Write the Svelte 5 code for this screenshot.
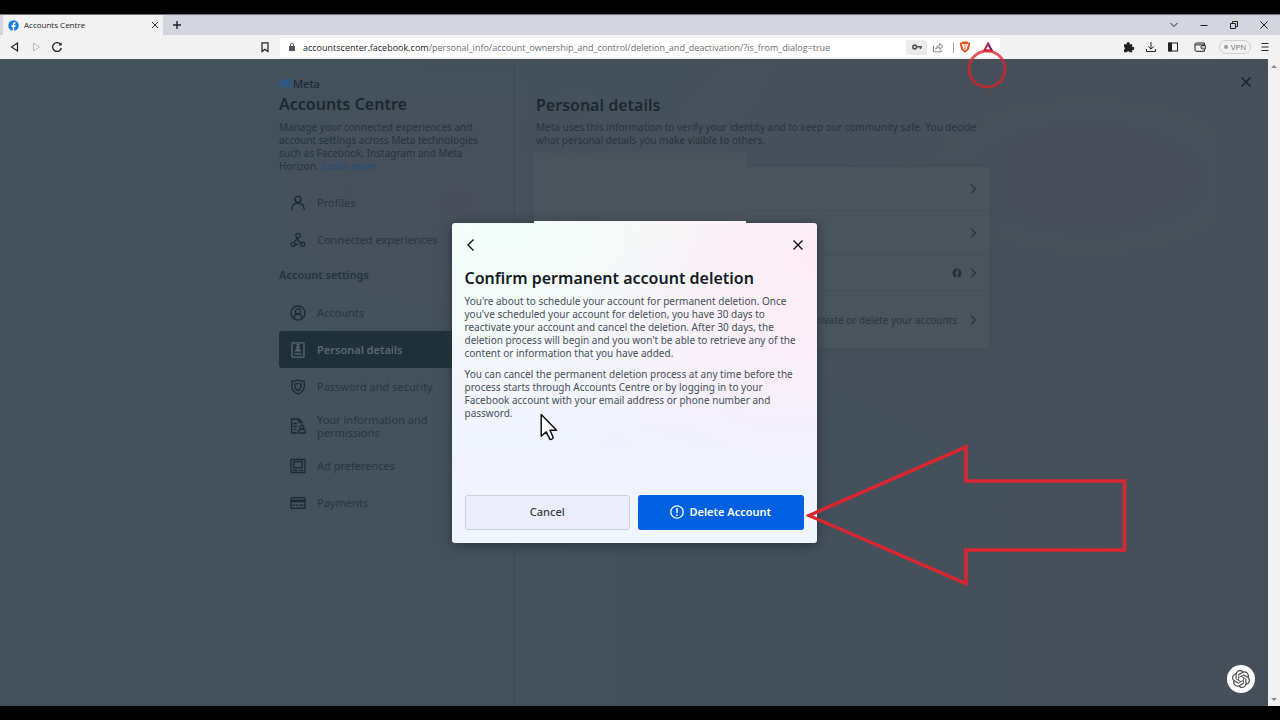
<script lang="ts">
  const profileItems = [
    { id: 'profiles', label: 'Profiles' },
    { id: 'connected', label: 'Connected experiences' }
  ];

  const settingItems = [
    { id: 'accounts', label: 'Accounts' },
    { id: 'personal', label: 'Personal details' },
    { id: 'password', label: 'Password and security' },
    { id: 'info', label: 'Your information and permissions' },
    { id: 'ads', label: 'Ad preferences' },
    { id: 'payments', label: 'Payments' }
  ];

  const rows = [
    { id: 'contact', height: 'tall' },
    { id: 'birthday', height: 'tall' },
    { id: 'identity', height: 'short', facebook: true },
    { id: 'ownership', height: 'last', text: 'Deactivate or delete your accounts' }
  ];

  let active = $state('personal');
</script>

{#snippet cross()}
  <svg class="cross" viewBox="0 0 12 12" fill="none" stroke="currentColor" stroke-width="1.4">
    <path d="M1.5 1.5l9 9M10.5 1.5l-9 9" />
  </svg>
{/snippet}

{#snippet navIcon(id: string)}
  <svg class="nav-icon" viewBox="0 0 16 16" fill="none" stroke="currentColor" stroke-width="1.3" stroke-linecap="round" stroke-linejoin="round">
    {#if id === 'profiles'}
      <circle cx="8" cy="4.4" r="3" />
      <path d="M1.7 14.5c.3-4 2.6-6.4 6.3-6.4s6 2.4 6.3 6.4" />
    {:else if id === 'connected'}
      <circle cx="8" cy="3.6" r="2.2" />
      <circle cx="3.2" cy="12.3" r="2" />
      <circle cx="12.8" cy="12.3" r="2" />
      <path d="M7.3 5.7L4.2 10.5M8 5.8v3l3.2 2.4M5.2 12.3h2.5" />
    {:else if id === 'accounts'}
      <circle cx="8" cy="8" r="7" />
      <circle cx="8" cy="6.5" r="2.6" />
      <path d="M3.9 13c.5-2.4 1.9-3.9 4.1-3.9s3.6 1.5 4.1 3.9" />
    {:else if id === 'personal'}
      <rect x="2" y="0.8" width="12" height="14.4" rx="0.5" />
      <circle cx="8" cy="5.2" r="1.2" />
      <path d="M5.5 8.9c.5-1.6 4.5-1.6 5 0zM5 11.8h6M7 2.6h2" />
    {:else if id === 'password'}
      <path d="M8 1.2c2 .9 4.2 1.2 6.3 1v4.3c0 4-2.2 6.900-6.300 8.500-4.100-1.600-6.300-4.500-6.300-8.500V2.200c2.100.2 4.300-.1 6.300-1z" />
      <path d="M8 4.500c1.100.4 2.200.6 3.200.5v1.800c0 2.200-1.200 3.700-3.200 4.800-2-1.100-3.200-2.600-3.200-4.800V5c1 .1 2.100-.1 3.200-.5z" />
    {:else if id === 'info'}
      <path d="M6.500 15H1.600V1h7.200l3.200 3.200v2M8.800 1v3.200H12M4 5.500h2.500M4 8.300h3M4 11.200h2" />
      <circle cx="12" cy="9.5" r="1.9" />
      <path d="M11 11.300l-2.600 1.300V15h7.200v-2.400L13 11.300" />
    {:else if id === 'ads'}
      <rect x="1" y="1.5" width="14" height="13" />
      <rect x="3.8" y="3.7" width="8.4" height="6.2" />
      <path d="M3.500 12.300h4M10 12.300h2.500" />
    {:else}
      <rect x="1" y="2.7" width="14" height="10.6" />
      <path d="M1 5.200h14M1 6.500h14M3.200 10.200h1.300M6.500 10.200h1.300M10 10.200h2.500" />
    {/if}
  </svg>
{/snippet}

{#snippet navList(items: { id: string; label: string }[])}
  <ul class="nav-list">
    {#each items as item (item.id)}
      <li>
        <button class="nav-item" class:active={item.id === active} onclick={() => (active = item.id)}>
          {@render navIcon(item.id)}
          <span>{item.label}</span>
        </button>
      </li>
    {/each}
  </ul>
{/snippet}

<div class="screen">
  <header class="browser">
    <div class="tab-bar">
      <div class="tab">
        <svg class="favicon" viewBox="0 0 12 12">
          <circle cx="6" cy="6" r="5.7" fill="#1580e4" />
          <path d="M5.200 11.600V7.500H3.800V5.800h1.400V4.700c0-1.500.8-2.300 2.100-2.300.5 0 .9.100 1.100.1V4h-.7c-.7 0-.9.300-.9.900v.9h1.600l-.3 1.700H6.800v4.100z" fill="#fff" />
        </svg>
        <span class="tab-title">Accounts Centre</span>
        <button class="tab-close" aria-label="Close tab">{@render cross()}</button>
      </div>
      <button class="new-tab" aria-label="New tab">
        <svg viewBox="0 0 10 10" stroke="currentColor" stroke-width="1.4"><path d="M5 1v8M1 5h8" /></svg>
      </button>
      <div class="window-controls">
        <button aria-label="Search tabs"><svg viewBox="0 0 10 10" fill="none" stroke="currentColor"><path d="M1.500 3L5 6.500 8.500 3" /></svg></button>
        <button aria-label="Minimise"><svg viewBox="0 0 10 10" fill="none" stroke="currentColor"><path d="M1.500 5.500h7" /></svg></button>
        <button aria-label="Restore"><svg viewBox="0 0 10 10" fill="none" stroke="currentColor"><path d="M1.500 3.500h5v5h-5zM3.500 3.500v-2h5v5h-2" /></svg></button>
        <button aria-label="Close"><svg viewBox="0 0 10 10" fill="none" stroke="currentColor"><path d="M1.500 1.500l7 7M8.500 1.500l-7 7" /></svg></button>
      </div>
    </div>

    <div class="toolbar">
      <div class="history">
        <button aria-label="Back"><svg viewBox="0 0 12 12" fill="none" stroke="currentColor" stroke-width="1.2"><path d="M8.500 2v8L2.500 6z" /></svg></button>
        <button aria-label="Forward" disabled><svg viewBox="0 0 12 12" fill="none" stroke="currentColor"><path d="M3.500 2v8l6-4z" /></svg></button>
        <button aria-label="Reload"><svg viewBox="0 0 12 12" fill="none" stroke="currentColor" stroke-width="1.3"><path d="M9.800 3.800A4.400 4.400 0 1 0 10.300 7" /><path d="M10.600 1.300v3.200H7.400z" fill="currentColor" stroke="none" /></svg></button>
        <button class="bookmark" aria-label="Bookmark"><svg viewBox="0 0 12 12" fill="none" stroke="currentColor" stroke-width="1.2"><path d="M3 1.800h6v8.700L6 8.200l-3 2.300z" /></svg></button>
      </div>

      <div class="address">
        <svg class="lock" viewBox="0 0 12 12" fill="none" stroke="currentColor"><rect x="3.5" y="5.5" width="5" height="4" fill="currentColor" /><path d="M4.500 5V3.700a1.500 1.500 0 0 1 3 0V5" /></svg>
        <span class="url"><span class="host">accountscenter.facebook.com</span>/personal_info/account_ownership_and_control/deletion_and_deactivation/?is_from_dialog=true</span>
        <button class="key" aria-label="Saved passwords"><svg viewBox="0 0 12 12" fill="none" stroke="currentColor" stroke-width="1.6"><circle cx="3.7" cy="6" r="1.9" /><path d="M5.600 5.700H11M9.500 5.700V8" /></svg></button>
        <button aria-label="Share"><svg viewBox="0 0 12 12" fill="none" stroke="#777" stroke-width="0.9"><path d="M1.500 4.500v6.300h7.800V9" /><path d="M3.700 8.300c.3-2.400 1.700-3.600 4-3.700V2.400L11 5.500 7.700 8.400V6.500c-1.800 0-3 .5-4 1.800z" /></svg></button>
        <span class="separator"></span>
        <button aria-label="Brave Shields"><svg viewBox="0 0 12 12"><path d="M3.500.5h5l1 1 1.200-.1.500 2.100-1.500 5.300L6 11.700 2.300 8.800.8 3.500l.5-2.100 1.200.1z" fill="#e8541d" /><path d="M2.500 3.300L4.500 3l1.500.4L7.500 3l2 .3-1.600 3.400.1 1L6 9.400 4 7.700l.1-1z" fill="#fff" /><path d="M4 4.500l1.400.4M8 4.500l-1.400.4M6 5v2M5 7.300l1 .6 1-.6" stroke="#e8541d" stroke-width=".7" fill="none" /></svg></button>
        <button class="rewards" aria-label="Brave Rewards"><svg viewBox="0 0 12 12"><path d="M6 .8L.6 10.600h10.800z" fill="#c31a3b" /><path d="M6 .8l5.400 9.800L8 8.500 6 4.800z" fill="#7b1c76" /><path d="M6 4.800L3.900 8.600h4.200z" fill="#fff" /></svg></button>
      </div>

      <div class="tools">
        <button aria-label="Extensions"><svg viewBox="0 0 12 12" fill="currentColor"><path d="M1 3.200h2.700a1.600 1.600 0 1 1 3 0h2.500V6a1.500 1.500 0 1 1 0 2.800v2.500H6.600a1.500 1.500 0 0 0-2.800 0H1V8.700a1.500 1.500 0 0 0 0-2.800z" /></svg></button>
        <button aria-label="Downloads"><svg viewBox="0 0 12 12" fill="none" stroke="currentColor"><path d="M6 1v7M3.300 5.500L6 8.200l2.700-2.700M1.500 8v2.500h9V8" /></svg></button>
        <button aria-label="Sidebar"><svg viewBox="0 0 12 12" fill="none" stroke="currentColor"><rect x="1.5" y="2" width="9" height="8" /><path d="M2 2h2.500v8H2z" fill="currentColor" /></svg></button>
        <button class="wallet" aria-label="Wallet"><svg viewBox="0 0 12 12" fill="none" stroke="currentColor"><path d="M10.500 4V2H2.500C1.500 2 1 2.500 1 3.200V9c0 .8.500 1.300 1.300 1.300h8.200V8.500M1 3.900h9.500" /><path d="M11.300 4.500H8.700a1.700 1.700 0 0 0 0 3.500h2.600zM8.500 6.200h.8" /></svg></button>
        <button class="vpn"><span class="dot"></span>VPN</button>
        <button aria-label="Menu"><svg viewBox="0 0 12 12" stroke="currentColor" stroke-width="1.2"><path d="M2.500 2.500h7M2.500 6h7M2.500 9.500h7" /></svg></button>
      </div>
    </div>
    <svg class="click-ring" viewBox="0 0 40 40" fill="none" stroke="#d8202c" stroke-opacity=".75" stroke-width="3"><circle cx="20" cy="20" r="18" /></svg>
  </header>

  <div class="viewport">
    <div class="page">
      <div class="content">
        <aside class="sidebar">
          <div class="brand">
            <svg viewBox="0 0 14 10" fill="none" stroke="#1f5cae" stroke-width="1.5"><path d="M1 7C1 3.500 2.300 1.200 3.900 1.200c2.400 0 4 7.500 6.700 7.500 1.500 0 2.400-.8 2.400-2.300 0-3-1.300-5.200-3-5.200-2.700 0-4 7.500-7 7.500C1.700 8.700 1 8.200 1 7z" /></svg>
            <span>Meta</span>
          </div>
          <h1>Accounts Centre</h1>
          <p class="intro">Manage your connected experiences and account settings across Meta technologies such as Facebook, Instagram and Meta Horizon. <a href="#learn">Learn more</a></p>
          <nav>
            {@render navList(profileItems)}
            <h2>Account settings</h2>
            {@render navList(settingItems)}
          </nav>
        </aside>

        <main>
          <h1>Personal details</h1>
          <p>Meta uses this information to verify your identity and to keep our community safe. You decide what personal details you make visible to others.</p>
          <div class="card">
            {#each rows as row (row.id)}
              <button class="row {row.height}" aria-label={row.text ?? row.id}>
                {#if row.text}<span>{row.text}</span>{/if}
                {#if row.facebook}
                  <svg class="fb" viewBox="0 0 10 10"><circle cx="5" cy="5" r="4.5" fill="#26333c" /><path d="M4.300 9.500V6H3.200V4.600h1.100v-.8c0-1.200.7-1.800 1.700-1.800h.8v1.300h-.5c-.5 0-.6.200-.6.600v.7h1.200L6.700 6h-1v3.500z" fill="#4b555e" /></svg>
                {/if}
                <svg class="chevron" viewBox="0 0 10 10" fill="none" stroke="currentColor" stroke-width="1.2"><path d="M3 .5L7.500 5 3 9.500" /></svg>
              </button>
            {/each}
            <div class="redacted"></div>
          </div>
        </main>
      </div>

      <button class="page-close" aria-label="Close Accounts Centre">{@render cross()}</button>

      <div class="overlay">
        <div class="modal" role="dialog" aria-labelledby="modal-title">
          <div class="modal-bar">
            <button aria-label="Back"><svg viewBox="0 0 12 12" fill="none" stroke="currentColor" stroke-width="1.3"><path d="M8.500 0.500L3 6l5.500 5.500" /></svg></button>
            <button aria-label="Close">{@render cross()}</button>
          </div>
          <h2 id="modal-title">Confirm permanent account deletion</h2>
          <p>You're about to schedule your account for permanent deletion. Once you've scheduled your account for deletion, you have 30 days to reactivate your account and cancel the deletion. After 30 days, the deletion process will begin and you won't be able to retrieve any of the content or information that you have added.</p>
          <p>You can cancel the permanent deletion process at any time before the process starts through Accounts Centre or by logging in to your Facebook account with your email address or phone number and password.</p>
          <div class="actions">
            <button class="cancel">Cancel</button>
            <button class="delete">
              <svg viewBox="0 0 14 14" fill="none" stroke="currentColor" stroke-width="1.3"><circle cx="7" cy="7" r="6.2" /><path d="M7 3v5M7 9.500V11" stroke-width="1.5" /></svg>
              Delete Account
            </button>
          </div>
          <svg class="arrow" viewBox="0 0 322 144" fill="none" stroke="#d8252f" stroke-width="3.5"><path d="M3 71.500L160 3V37h158.500v69H160v33.500z" /></svg>
          <svg class="cursor" viewBox="0 0 18 28"><path d="M1.200 1.500v21.700l5-4.300 3.600 7.300c.4.900 3.800-.6 3.400-1.700l-3.200-7.300h6.600z" fill="#fff" stroke="#111" stroke-width="1.5" stroke-linejoin="round" /></svg>
        </div>
      </div>

      <button class="assistant" aria-label="Open assistant">
        <svg viewBox="0 0 24 24" fill="#4b4b4b">
          <path d="M22.282 9.821a5.985 5.985 0 0 0-.516-4.911 6.046 6.046 0 0 0-6.510-2.900A6.065 6.065 0 0 0 4.981 4.182a5.985 5.985 0 0 0-3.998 2.900 6.046 6.046 0 0 0 .743 7.097 5.980 5.980 0 0 0 .511 4.911 6.051 6.051 0 0 0 6.515 2.900A5.985 5.985 0 0 0 13.260 24a6.056 6.056 0 0 0 5.772-4.206 5.990 5.990 0 0 0 3.998-2.900 6.056 6.056 0 0 0-.748-7.073zM13.260 22.430a4.476 4.476 0 0 1-2.876-1.041l.142-.080 4.778-2.758a.795.795 0 0 0 .393-.681v-6.737l2.020 1.169a.071.071 0 0 1 .038.052v5.583a4.504 4.504 0 0 1-4.495 4.493zM3.600 18.304a4.471 4.471 0 0 1-.535-3.014l.142.085 4.783 2.759a.771.771 0 0 0 .781 0l5.843-3.369v2.332a.080.080 0 0 1-.033.062L9.740 19.950A4.499 4.499 0 0 1 3.600 18.304zM2.341 7.896a4.485 4.485 0 0 1 2.366-1.973V11.600a.766.766 0 0 0 .388.677l5.814 3.354-2.020 1.169a.076.076 0 0 1-.071 0l-4.830-2.787A4.504 4.504 0 0 1 2.341 7.872zm16.596 3.856l-5.833-3.388L15.119 7.200a.076.076 0 0 1 .071 0l4.830 2.791a4.494 4.494 0 0 1-.676 8.105v-5.678a.790.790 0 0 0-.407-.666zm2.011-3.024l-.142-.085-4.774-2.782a.776.776 0 0 0-.785 0L9.409 9.230V6.897a.066.066 0 0 1 .028-.061l4.830-2.787a4.499 4.499 0 0 1 6.680 4.660zm-12.640 4.135l-2.020-1.164a.080.080 0 0 1-.038-.057V6.075a4.499 4.499 0 0 1 7.375-3.453l-.142.080-4.778 2.758a.795.795 0 0 0-.393.681zm1.097-2.365l2.602-1.500 2.607 1.500v2.999l-2.597 1.500-2.607-1.500z" />
        </svg>
      </button>
    </div>

    <div class="scrollbar">
      <svg viewBox="0 0 8 6"><path d="M1 5l3-3 3 3z" fill="#8b8b8b" /></svg>
      <svg viewBox="0 0 8 6"><path d="M1 1l3 3 3-3z" fill="#8b8b8b" /></svg>
    </div>
  </div>
</div>

<style>
  :global(body) {
    margin: 0;
    background: #000;
  }

  .screen {
    box-sizing: border-box;
    min-height: 100vh;
    padding: 14px 0;
    display: flex;
    flex-direction: column;
    background: #000;
    font-family: 'Noto Sans', sans-serif;
    font-size: 10px;
    color: #26343d;
  }

  .screen * {
    box-sizing: border-box;
  }

  button {
    display: flex;
    align-items: center;
    justify-content: center;
    padding: 0;
    border: 0;
    background: none;
    color: inherit;
    font: inherit;
    cursor: pointer;
  }

  svg {
    display: block;
    flex-shrink: 0;
  }

  h1,
  h2,
  p,
  ul {
    margin: 0;
    padding: 0;
  }

  .cross {
    width: 12px;
    height: 12px;
  }

  /* browser chrome */
  .browser {
    position: relative;
    font-family: 'Open Sans', sans-serif;
    color: #222;
  }

  .tab-bar {
    display: flex;
    align-items: center;
    height: 21px;
    padding-left: 3px;
    background: #d3d6df;
    border-top: 1px solid #77727b;
  }

  .tab {
    display: flex;
    align-items: center;
    gap: 5px;
    width: 160px;
    height: 20px;
    padding: 0 4px 0 5px;
    background: #f2f2f3;
    font-size: 8px;
    line-height: 10px;
  }

  .favicon {
    width: 11px;
    height: 11px;
  }

  .tab-close {
    margin-left: auto;
  }

  .tab-close .cross {
    width: 8px;
    height: 8px;
  }

  .new-tab {
    margin-left: 9px;
  }

  .new-tab svg,
  .window-controls svg {
    width: 10px;
    height: 10px;
  }

  .window-controls {
    display: flex;
    gap: 20px;
    margin-left: auto;
    padding-right: 11px;
  }

  .toolbar {
    display: grid;
    grid-template-columns: 280px 1fr 280px;
    align-items: center;
    height: 24px;
    background: #f2f2f3;
  }

  .toolbar svg {
    width: 12px;
    height: 12px;
  }

  .history,
  .tools {
    display: flex;
    align-items: center;
    gap: 9px;
    padding: 0 9px;
  }

  .history button:disabled {
    color: #bbb;
  }

  .bookmark {
    margin-left: auto;
  }

  .address {
    display: flex;
    align-items: center;
    gap: 9px;
    height: 19px;
    padding: 0 6px;
    background: #fff;
  }

  .lock {
    color: #555;
  }

  .url {
    flex: 1;
    margin-left: -4px;
    overflow: hidden;
    white-space: nowrap;
    color: #6e6e6e;
    font-size: 9px;
  }

  .host {
    color: #222;
  }

  .key {
    width: 21px;
    height: 15px;
    margin-right: -4px;
    background: #ebebec;
    border-radius: 2px;
    color: #555;
  }

  .separator {
    width: 1px;
    height: 11px;
    margin-right: -4px;
    background: #aaa;
  }

  .rewards {
    margin-left: 2px;
  }

  .tools {
    gap: 10px;
    justify-content: flex-end;
  }

  .wallet {
    margin: 0 3px 0 5px;
  }

  .vpn {
    gap: 3px;
    width: 32px;
    height: 14px;
    margin-right: -2px;
    border: 1px solid #cfcfd6;
    border-radius: 7px;
    color: #777;
    font-size: 8px;
    line-height: 10px;
  }

  .dot {
    width: 4px;
    height: 4px;
    border-radius: 50%;
    background: #999;
  }

  .click-ring {
    position: absolute;
    z-index: 3;
    top: 35px;
    right: 273px;
    width: 40px;
    height: 40px;
  }

  /* page behind the dialog */
  .viewport {
    flex: 1;
    display: flex;
  }

  .page {
    position: relative;
    flex: 1;
    background:
      radial-gradient(ellipse at 36% 22%, #484f5a 0%, transparent 22%),
      radial-gradient(ellipse at 86% 18%, #484f5a 0%, transparent 40%),
      linear-gradient(90deg, #43525b 0%, #44515a 60%, #454f59 100%);
  }

  .content {
    display: grid;
    grid-template-columns: 236px 1fr;
    width: 710px;
    max-width: 100%;
    min-height: 100%;
    margin: 0 auto;
  }

  .sidebar {
    padding: 17px 11px 0 0;
    border-right: 1px solid #3f4952;
  }

  .brand {
    display: flex;
    align-items: center;
    gap: 1px;
    height: 14px;
    color: #202d36;
    font-size: 11px;
    font-weight: 500;
    line-height: 13px;
  }

  .brand svg {
    width: 13px;
    height: 10px;
  }

  h1 {
    color: #1c2932;
    font-size: 16px;
    font-weight: 600;
    line-height: 28px;
  }

  .intro {
    margin-top: 3px;
    padding-right: 16px;
  }

  .intro,
  main p {
    color: #28353e;
    font-size: 10px;
    line-height: 13px;
  }

  .intro a {
    display: inline-block;
    overflow: hidden;
    vertical-align: top;
    color: #214d80;
    text-decoration: none;
  }

  nav {
    margin-top: 11px;
    font-size: 11px;
    line-height: 13px;
  }

  nav h2 {
    padding-bottom: 2px;
    font-size: 11px;
    font-weight: 600;
    line-height: 34px;
  }

  .nav-list {
    list-style: none;
  }

  .nav-item {
    justify-content: flex-start;
    gap: 11px;
    width: 100%;
    min-height: 37px;
    padding: 8px 11px;
    text-align: left;
    color: #2a3740;
  }

  .nav-item.active {
    background: #1f303a;
    border-radius: 3px;
    color: #5a666e;
    font-weight: 600;
  }

  .nav-icon {
    width: 16px;
    height: 16px;
    color: #1d2a33;
  }

  .active .nav-icon {
    color: #5a666e;
  }

  main {
    padding: 32px 0 0 21px;
  }

  main p {
    margin-top: 2px;
  }

  .card {
    position: relative;
    margin-top: 20px;
    background: #4a545d;
    box-shadow: 0 0 4px #434d56;
  }

  .row {
    justify-content: flex-end;
    gap: 11px;
    width: 100%;
    padding-right: 11px;
    border-bottom: 1px solid #454f58;
    color: #2a3740;
  }

  .row:last-of-type {
    border-bottom: 0;
  }

  .tall {
    height: 44px;
  }

  .short {
    height: 36px;
  }

  .last {
    height: 57px;
  }

  .chevron,
  .fb {
    width: 10px;
    height: 10px;
  }

  .fb {
    margin-right: -5px;
  }

  .redacted {
    position: absolute;
    top: -14px;
    left: -2px;
    width: 212px;
    height: 70px;
    background: #4a545d;
  }

  .page-close {
    position: absolute;
    top: 17px;
    right: 16px;
    color: #16222b;
  }

  /* dialog */
  .overlay {
    position: absolute;
    inset: 0;
    display: grid;
    place-items: center;
  }

  .modal {
    position: relative;
    display: flex;
    flex-direction: column;
    width: 365px;
    min-height: 320px;
    padding: 14px 13px 13px;
    border-radius: 3px;
    background:
      radial-gradient(ellipse at 15% 0%, #f2fdf8 0%, transparent 55%),
      radial-gradient(ellipse at 100% 10%, #fcecf5 0%, transparent 60%),
      linear-gradient(180deg, #fafafb 0%, #f5f2fe 45%, #eff2fe 65%, #f1f5ff 100%);
    box-shadow: 0 2px 12px #2b353e;
    color: #465059;
  }

  /* leftover strip of the redaction block above the dialog edge */
  .modal::before {
    content: '';
    position: absolute;
    top: -2px;
    left: 82px;
    width: 212px;
    height: 2px;
    background: linear-gradient(90deg, #f4fbf8, #fdeff3);
  }

  .modal-bar {
    display: flex;
    justify-content: space-between;
    height: 16px;
    color: #111;
  }

  .modal-bar svg {
    width: 12px;
    height: 12px;
  }

  .modal h2 {
    margin: 15px 0 7px;
    color: #111c24;
    font-size: 16px;
    font-weight: 600;
    line-height: 20px;
  }

  .modal p {
    margin-bottom: 8px;
    font-size: 10px;
    line-height: 13px;
  }

  .actions {
    display: grid;
    grid-template-columns: 1fr 1fr;
    gap: 8px;
    margin-top: auto;
  }

  .actions button {
    gap: 5px;
    height: 35px;
    padding-bottom: 1px;
    border-radius: 3px;
    font-size: 11px;
  }

  .actions .cancel {
    border: 1px solid #cbd0dc;
    background: #ebeefa;
    color: #333d46;
    font-weight: 500;
  }

  .actions .delete {
    background: #0060df;
    color: #fff;
    font-weight: 600;
  }

  .delete svg {
    width: 14px;
    height: 14px;
  }

  .arrow {
    position: absolute;
    top: 221px;
    left: 354px;
    width: 322px;
    height: 144px;
    pointer-events: none;
  }

  .cursor {
    position: absolute;
    top: 190px;
    left: 88px;
    width: 18px;
    height: 28px;
    pointer-events: none;
  }

  .assistant {
    position: absolute;
    right: 13px;
    bottom: 13px;
    width: 28px;
    height: 28px;
    border-radius: 50%;
    background: #fff;
  }

  .assistant svg {
    width: 18px;
    height: 18px;
  }

  .scrollbar {
    display: flex;
    flex-direction: column;
    justify-content: space-between;
    align-items: center;
    width: 12px;
    padding: 4px 0 3px;
    background: #f1f1f3;
  }

  .scrollbar svg {
    width: 8px;
    height: 6px;
  }
</style>
